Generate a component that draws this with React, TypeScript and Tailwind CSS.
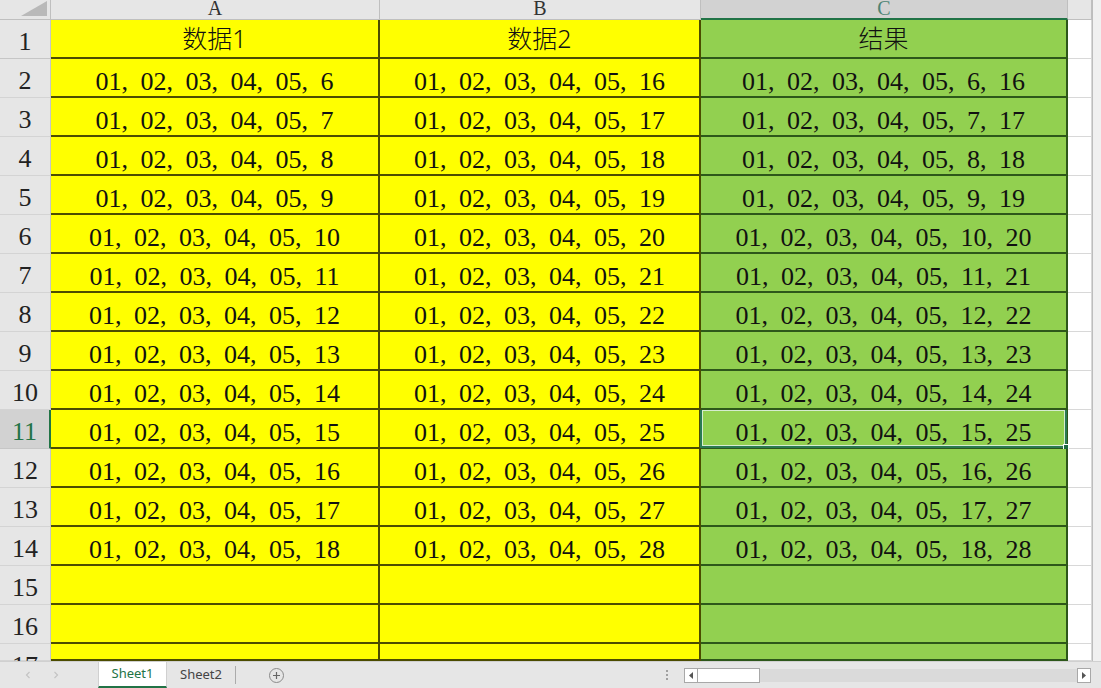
import React from 'react';

const serif = { fontFamily: '"Liberation Serif", "Noto Sans CJK SC", serif' };
const sans = { fontFamily: '"Noto Sans", "Noto Sans CJK SC", sans-serif' };

const rows = Array.from({ length: 13 }, (_, i) => {
  const n = i + 6;
  return {
    a: `01, 02, 03, 04, 05, ${n}`,
    b: `01, 02, 03, 04, 05, ${n + 10}`,
    c: `01, 02, 03, 04, 05, ${n}, ${n + 10}`,
  };
});

type RowProps = {
  num: number;
  a?: string;
  b?: string;
  c?: string;
  active?: boolean;
  partial?: boolean;
};

const Row: React.FC<RowProps> = ({ num, a = '', b = '', c = '', active, partial }) => {
  const h = partial ? 'h-[17px]' : 'h-[39px]';
  const text = 'text-[26px] text-[#111] leading-[37px] pt-[4px] whitespace-nowrap [word-spacing:6px]';
  return (
    <div className={`flex ${h} overflow-hidden`}>
      <div
        className={`w-[51px] shrink-0 flex justify-center text-[26px] leading-[37px] pt-[3px] ${
          active
            ? 'bg-[#d2d2d2] text-[#217346] border-r-2 border-[#217346] border-b border-b-[#c6c6c6]'
            : 'bg-[#e6e6e6] text-[#222] border-r border-[#c6c6c6] border-b border-b-[#d4d4d4]'
        }`}
        style={serif}
      >
        {num}
      </div>
      <div
        className={`w-[329px] shrink-0 bg-[#ffff00] border-r-2 border-b-2 border-[#4c4c00] flex justify-center ${text}`}
        style={serif}
      >
        {a}
      </div>
      <div
        className={`w-[321px] shrink-0 bg-[#ffff00] border-r-2 border-b-2 border-[#4c4c00] flex justify-center ${text}`}
        style={serif}
      >
        {b}
      </div>
      <div
        className={`relative w-[367px] shrink-0 bg-[#92d050] border-r-2 border-b-2 border-[#2d571a] flex justify-center ${text}`}
        style={serif}
      >
        {c}
        {active && (
          <div className="absolute -left-[1px] -top-[2px] -right-[1px] -bottom-[1px] border-2 border-[#2a7a52] shadow-[inset_0_0_0_1px_#d6ecd0]">
            <div className="absolute -right-[4px] -bottom-[4px] w-[6px] h-[6px] bg-[#1d6b40] border border-white" />
          </div>
        )}
      </div>
      <div className="w-[24px] shrink-0 bg-white border-r border-b border-[#d8d8d8]" />
      <div className="flex-1 bg-[#f0f0f0] border-l border-[#bdbdbd]" />
    </div>
  );
};

const HeaderRow: React.FC<{ num: number; text: string }> = ({ num, text }) => (
  <div className="flex h-[39px] overflow-hidden">
    <div
      className="w-[51px] shrink-0 flex justify-center bg-[#e6e6e6] text-[#222] border-r border-b border-[#c6c6c6] text-[26px] leading-[37px] pt-[3px]"
      style={serif}
    >
      {num}
    </div>
    <div
      className="w-[329px] shrink-0 bg-[#ffff00] border-r-2 border-b-2 border-[#4c4c00] flex items-center justify-center text-[25px] font-light text-[#111]"
      style={sans}
    >
      {text}1
    </div>
    <div
      className="w-[321px] shrink-0 bg-[#ffff00] border-r-2 border-b-2 border-[#4c4c00] flex items-center justify-center text-[25px] font-light text-[#111]"
      style={sans}
    >
      {text}2
    </div>
    <div
      className="w-[367px] shrink-0 bg-[#92d050] border-r-2 border-b-2 border-[#2d571a] flex items-center justify-center text-[25px] font-light text-[#111]"
      style={sans}
    >
      结果
    </div>
    <div className="w-[24px] shrink-0 bg-white border-r border-b border-[#d8d8d8]" />
    <div className="flex-1 bg-[#f0f0f0] border-l border-[#bdbdbd]" />
  </div>
);

const ColumnHeaders: React.FC = () => (
  <div className="flex h-[20px] overflow-hidden text-[20px] leading-[18px]" style={serif}>
    <div className="w-[51px] shrink-0 bg-[#e6e6e6] border-r border-b border-[#bfbfbf] relative">
      <svg className="absolute left-0 top-0" width="51" height="20" viewBox="0 0 51 20">
        <polygon points="47,1 47,16 21,16" fill="#b9b9b9" />
      </svg>
    </div>
    <div className="w-[329px] shrink-0 bg-[#e6e6e6] border-r border-b border-[#bfbfbf] flex justify-center text-[#333]">
      <span className="-mt-[1px]">A</span>
    </div>
    <div className="w-[321px] shrink-0 bg-[#e6e6e6] border-r border-b border-[#bfbfbf] flex justify-center text-[#333]">
      <span className="-mt-[1px]">B</span>
    </div>
    <div className="w-[367px] shrink-0 bg-[#d2d2d2] border-r border-[#bfbfbf] border-b-2 border-b-[#217346] flex justify-center text-[#4d8474]">
      <span className="-mt-[1px]">C</span>
    </div>
    <div className="w-[24px] shrink-0 bg-[#e6e6e6] border-r border-b border-[#bfbfbf]" />
    <div className="flex-1 bg-[#f0f0f0] border-l border-[#bdbdbd]" />
  </div>
);

const ArrowBox: React.FC<{ dir: 'l' | 'r' }> = ({ dir }) => (
  <div className="w-[14px] h-[15px] bg-white border border-[#a8a8a8] flex items-center justify-center">
    <svg width="6" height="7" viewBox="0 0 6 7">
      {dir === 'l' ? <polygon points="5,0 5,7 1,3.5" fill="#555" /> : <polygon points="1,0 1,7 5,3.5" fill="#555" />}
    </svg>
  </div>
);

const BottomBar: React.FC = () => (
  <div className="h-[27px] bg-[#e6e6e6] border-t border-[#d0d0d0] flex items-stretch" style={sans}>
    <div className="w-[98px] shrink-0 flex items-center">
      <svg className="ml-[25px]" width="6" height="8" viewBox="0 0 6 8">
        <polyline points="4.5,1 1.5,4 4.5,7" fill="none" stroke="#c4c4c4" strokeWidth="1.2" />
      </svg>
      <svg className="ml-[22px]" width="6" height="8" viewBox="0 0 6 8">
        <polyline points="1.5,1 4.5,4 1.5,7" fill="none" stroke="#c4c4c4" strokeWidth="1.2" />
      </svg>
    </div>
    <div className="w-[69px] shrink-0 bg-white border-x border-[#d0d0d0] border-b-2 border-b-[#217346] flex items-center justify-center text-[13px] text-[#217346]">
      Sheet1
    </div>
    <div className="w-[68px] shrink-0 flex items-center justify-center text-[13px] text-[#444]">Sheet2</div>
    <div className="w-px my-[4px] bg-[#ababab]" />
    <div className="ml-[33px] flex items-center">
      <div className="w-[15px] h-[15px] rounded-full border border-[#8a8a8a] flex items-center justify-center">
        <svg width="9" height="9" viewBox="0 0 9 9">
          <path d="M4.5 1v7M1 4.5h7" stroke="#666" strokeWidth="1.2" />
        </svg>
      </div>
    </div>
    <div className="ml-[382px] flex flex-col justify-center gap-[2px]">
      <div className="w-[2px] h-[2px] bg-[#a0a0a0]" />
      <div className="w-[2px] h-[2px] bg-[#a0a0a0]" />
      <div className="w-[2px] h-[2px] bg-[#a0a0a0]" />
    </div>
    <div className="ml-[16px] flex items-center">
      <ArrowBox dir="l" />
      <div className="w-[62px] h-[15px] bg-white border-y border-r border-[#a8a8a8]" />
      <div className="w-[317px] h-[13px] bg-[#dadada]" />
      <ArrowBox dir="r" />
    </div>
  </div>
);

const App: React.FC = () => {
  return (
    <div className="w-[1101px] h-[688px] overflow-hidden bg-white flex flex-col">
      <div className="h-[661px] overflow-hidden flex flex-col">
        <ColumnHeaders />
        <HeaderRow num={1} text="数据" />
        {rows.map((r, i) => (
          <Row key={i} num={i + 2} a={r.a} b={r.b} c={r.c} active={i + 2 === 11} />
        ))}
        <Row num={15} />
        <Row num={16} />
        <Row num={17} partial />
      </div>
      <BottomBar />
    </div>
  );
};

export default App;
